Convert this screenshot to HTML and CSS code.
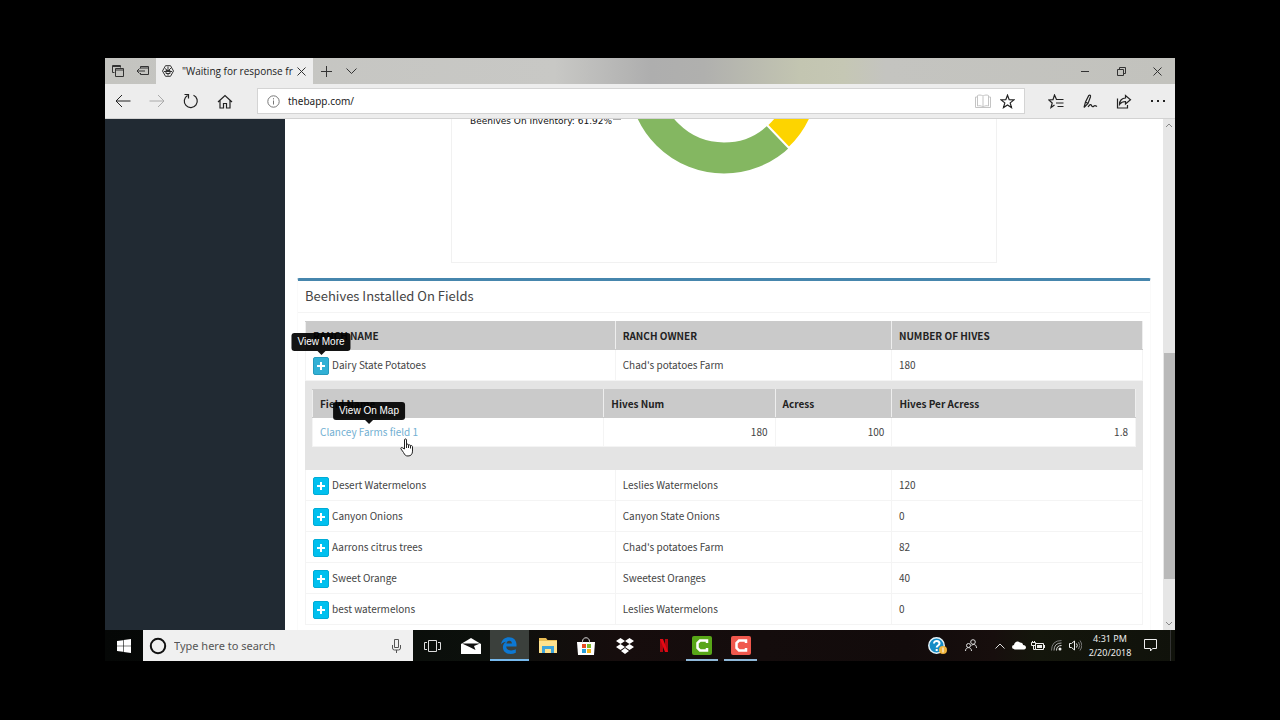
FILE: index.html
```html
<!DOCTYPE html>
<html lang="en">
<head>
    <meta charset="UTF-8">
    <meta name="viewport" content="width=device-width, initial-scale=1.0">
    <title>Beehives Installed On Fields</title>
    <link rel="stylesheet" href="styles.css">
</head>
<body>
    <div class="window">
        <!-- tab strip -->
        <div class="tab-strip">
            <button class="strip-btn" aria-label="Tabs set aside"><svg width="12" height="12" viewBox="0 0 12 12"><path d="M2.5 7.5h-2v-7h8v2M.5 1.5h8M3.500 3.500h8v8h-8zM3.500 5h8" /></svg></button>
            <button class="strip-btn" aria-label="Set tabs aside"><svg width="14" height="12" viewBox="0 0 14 12"><path d="M4.500 3.500v-2h8v8h-8v-1.500M4.500 3h8M9 6H1M3.500 3.500L1 6l2.500 2.500" /></svg></button>
            <div class="tab">
                <svg class="favicon" width="12" height="12" viewBox="0 0 12 12"><path d="M3.500 .7h5L11.500 6l-3 5.300h-5L.5 6z" /><path d="M3 3.500l2.500 2M9 3L6.500 5.500M6 1.500V5M2 6.500h8M4 5.500h4v3H4zM6 8.500v2" /></svg>
                <span class="tab-title">"Waiting for response fr</span>
                <button class="tab-close" aria-label="Close tab"><svg width="9" height="9" viewBox="0 0 9 9"><path d="M.5.5l8 8M8.500.5l-8 8" /></svg></button>
            </div>
            <button class="strip-btn" aria-label="New tab"><svg width="11" height="11" viewBox="0 0 11 11"><path d="M5.500 0v11M0 5.500h11" /></svg></button>
            <button class="strip-btn" aria-label="Tab previews"><svg width="11" height="7" viewBox="0 0 11 7"><path d="M.5.5l5 5 5-5" /></svg></button>
            <div class="window-controls">
                <button aria-label="Minimize"><svg width="8" height="9" viewBox="0 0 8 9"><path d="M0 4.500h8" /></svg></button>
                <button aria-label="Restore"><svg width="9" height="9" viewBox="0 0 9 9"><path d="M.5 2.500h6v6h-6zM2.500 2.500v-2h6v6h-2" /></svg></button>
                <button aria-label="Close"><svg width="9" height="9" viewBox="0 0 9 9"><path d="M.5.5l8 8M8.500.5l-8 8" /></svg></button>
            </div>
        </div>

        <!-- navigation bar -->
        <div class="nav-bar">
            <button aria-label="Back"><svg width="16" height="14" viewBox="0 0 16 14"><path d="M15.500 7H1M7 1L1 7l6 6" /></svg></button>
            <button class="disabled" aria-label="Forward"><svg width="16" height="14" viewBox="0 0 16 14"><path d="M.5 7H15M9 1l6 6-6 6" /></svg></button>
            <button aria-label="Refresh"><svg width="16" height="16" viewBox="0 0 16 16"><path class="bold" d="M10.500 2.200A6.500 6.500 0 1 1 4.500 2.500M1.500 1.500h4v4" /></svg></button>
            <button aria-label="Home"><svg width="16" height="15" viewBox="0 0 16 15"><path class="bold" d="M1 8l7-6.500L15 8M3 6.500v7.500h3.500V9.500h3V14H13V6.500" /></svg></button>
            <div class="address">
                <svg class="info" width="13" height="13" viewBox="0 0 13 13"><circle cx="6.500" cy="6.500" r="5.700" /><path d="M6.500 5.500v4M6.500 3.200v1.200" /></svg>
                <input type="text" aria-label="Address" value="thebapp.com/">
                <button class="reading" aria-label="Reading view"><svg width="16" height="14" viewBox="0 0 16 14"><path d="M8 2.500v11M8 2C6 .8 4 .8 2.500 1.500v10.500C4 11.500 6 11.500 8 13c2-1.500 4-1.500 5.500-1V1.500C12 .8 10 .8 8 2zM2.500 3h-2v10.500h15V3h-2" /></svg></button>
                <button aria-label="Add to favorites"><svg width="15" height="15" viewBox="0 0 15 15"><path class="bold" d="M7.500 1.200l1.700 4.500 4.800.2-3.800 3 1.300 4.700-4-2.700-4 2.700 1.300-4.700L1 5.900l4.800-.2z" /></svg></button>
            </div>
            <button aria-label="Hub"><svg width="16" height="15" viewBox="0 0 16 15"><path class="bold" d="M8.500 5.500L6.500 1 5 5.700.8 6l3.400 3L3 13.500l3.500-2.500M8 5.500h7.500M8 9h7.500M9.500 12.500h6" /></svg></button>
            <button aria-label="Add notes"><svg width="16" height="15" viewBox="0 0 16 15"><path class="bold" d="M2 13.500l1.500-5.500L6.800 1.500c1-.8 2 0 1.700 1.200L6 9.500l-4 4M3.500 8l2.500 1.500M6 13c2-3 3-3 3.500-1.500s1.500 1.500 2.500.5 1.500-.5 3 .5" /></svg></button>
            <button aria-label="Share"><svg width="16" height="15" viewBox="0 0 16 15"><path class="bold" d="M1.500 4.500v9.500h10V11M3.500 10.500c0-4 2.500-6.500 6-6.500V1.500l5 4.200-5 4.300V7.500c-3 0-4.500.8-6 3z" /></svg></button>
            <button aria-label="More"><svg width="16" height="4" viewBox="0 0 16 4"><path class="dots" d="M1 1h2v2H1zM7 1h2v2H7zM13 1h2v2h-2z" /></svg></button>
        </div>

        <!-- web page -->
        <div class="page">
            <aside class="sidebar"></aside>
            <main class="content">
                <div class="chart-box">
                    <svg width="544" height="143" viewBox="0 0 544 143" role="img" aria-label="Beehives chart">
                        <circle cx="272" cy="-41" r="80" fill="none" stroke="#84b761" stroke-width="31" />
                        <path d="M315 6L337 29A95.500 95.500 0 0 0 367 -41H336A64 64 0 0 1 315 6z" fill="#fdd400" stroke="#fff" stroke-width="2" />
                        <path d="M161 .5h8" stroke="#aaa" />
                        <text class="chart-label" x="18" y="5">Beehives On Inventory: 61.92%</text>
                    </svg>
                </div>

                <section class="box">
                    <h3 class="box-title">Beehives Installed On Fields</h3>
                    <div class="box-body">
                        <table class="ranches">
                            <colgroup>
                                <col class="col-name">
                                <col class="col-owner">
                                <col class="col-hives">
                            </colgroup>
                            <thead>
                                <tr><th>RANCH NAME</th><th>RANCH OWNER</th><th>NUMBER OF HIVES</th></tr>
                            </thead>
                            <tbody>
                                <tr>
                                    <td><div class="name"><span class="tip-anchor"><button class="btn-more active" aria-label="View More"></button><span class="tip">View More</span></span>Dairy State Potatoes</div></td>
                                    <td>Chad's potatoes Farm</td>
                                    <td>180</td>
                                </tr>
                                <tr class="details">
                                    <td colspan="3">
                                        <table class="fields">
                                            <colgroup>
                                                <col class="col-field">
                                                <col class="col-num">
                                                <col class="col-acres">
                                                <col class="col-per">
                                            </colgroup>
                                            <thead>
                                                <tr><th>Field Name</th><th>Hives Num</th><th>Acress</th><th>Hives Per Acress</th></tr>
                                            </thead>
                                            <tbody>
                                                <tr>
                                                    <td>
                                                        <span class="tip-anchor"><a href="#">Clancey Farms field 1</a><span class="tip">View On Map</span>
                                                            <svg class="pointer" width="14" height="19" viewBox="0 0 14 19"><path d="M4.500 11V2c0-1.500 2-1.500 2 0v5c0-1.200 2-1.200 2 0v.7c0-1.200 2-1.200 2 0v.6c0-1 2-1 2 .3v4.500c0 3-1.500 4.900-4.500 4.900-2.500 0-3.200-1-4.500-3.500L1 11c-.7-1.500 1-2 2-.8z" /><path d="M6.500 7v3M8.500 7.500V10M10.500 8v2.500" /></svg>
                                                        </span>
                                                    </td>
                                                    <td>180</td>
                                                    <td>100</td>
                                                    <td>1.8</td>
                                                </tr>
                                            </tbody>
                                        </table>
                                    </td>
                                </tr>
                                <tr>
                                    <td><div class="name"><button class="btn-more" aria-label="View More"></button>Desert Watermelons</div></td>
                                    <td>Leslies Watermelons</td>
                                    <td>120</td>
                                </tr>
                                <tr>
                                    <td><div class="name"><button class="btn-more" aria-label="View More"></button>Canyon Onions</div></td>
                                    <td>Canyon State Onions</td>
                                    <td>0</td>
                                </tr>
                                <tr>
                                    <td><div class="name"><button class="btn-more" aria-label="View More"></button>Aarrons citrus trees</div></td>
                                    <td>Chad's potatoes Farm</td>
                                    <td>82</td>
                                </tr>
                                <tr>
                                    <td><div class="name"><button class="btn-more" aria-label="View More"></button>Sweet Orange</div></td>
                                    <td>Sweetest Oranges</td>
                                    <td>40</td>
                                </tr>
                                <tr>
                                    <td><div class="name"><button class="btn-more" aria-label="View More"></button>best watermelons</div></td>
                                    <td>Leslies Watermelons</td>
                                    <td>0</td>
                                </tr>
                            </tbody>
                        </table>
                    </div>
                </section>
            </main>
            <div class="scrollbar">
                <svg width="8" height="5" viewBox="0 0 8 5"><path d="M1 4l3-3 3 3" /></svg>
                <div class="track"><div class="thumb"></div></div>
                <svg width="8" height="5" viewBox="0 0 8 5"><path d="M1 1l3 3 3-3" /></svg>
            </div>
        </div>

        <!-- taskbar -->
        <div class="taskbar">
            <button class="start" aria-label="Start"><svg width="14" height="14" viewBox="0 0 14 14"><path fill="#fff" d="M0 2l6-.8v5.500H0zM6.600 1.100L14 0v6.700H6.600zM0 7.300h6v5.500L0 12zM6.600 7.300H14V14l-7.400-1.100z" /></svg></button>
            <label class="search">
                <svg width="18" height="18" viewBox="0 0 18 18"><circle cx="9" cy="9" r="7.200" fill="none" stroke="#111" stroke-width="2" /></svg>
                <input type="text" aria-label="Search" placeholder="Type here to search">
                <svg width="11" height="14" viewBox="0 0 11 14"><path d="M3.500.5h4v8h-4zM1.500 6v3q0 2 2 2h4q2 0 2-2V6M5.500 11v3" fill="none" stroke="#555" /></svg>
            </label>
            <div class="apps">
                <button aria-label="Task View"><svg width="17" height="12" viewBox="0 0 17 12"><path d="M4.500.5h8v11h-8zM3 2.500H.5v7H3M14 2.500h2.500v7H14" fill="none" stroke="#ddd" /></svg></button>
                <button aria-label="Mail"><svg width="20" height="16" viewBox="0 0 20 16"><path fill="#fff" d="M0 6l10-6 10 6v10H0z" /><path fill="#111" d="M1 5.500h18l-6 2.500 1.500 4L8.500 9z" /></svg></button>
                <button class="current" aria-label="Edge"><svg width="16" height="17" viewBox="0 0 16 17"><path fill="#0d78d3" d="M0 7.500C.8 2.800 4 .3 8 .3c4.700 0 7.500 3.200 7.500 7.200v2H5.200c.2 3 2.500 4 5 4 1.700 0 3.200-.5 4.600-1.200v3.400c-1.600.8-3.400 1.200-5.400 1.200-4.600 0-7.500-2.700-7.500-6.700 0-2.400 1.200-4.400 3.300-5.500C3.200 4.900 1.400 5.500 0 7.500zM5.400 6.500h5.500C10.900 4.800 10 3.700 8.300 3.700c-1.600 0-2.600 1.100-2.900 2.800z" /></svg></button>
                <button aria-label="File Explorer"><svg width="18" height="15" viewBox="0 0 18 15"><path fill="#e9bd55" d="M0 0h7l1.500 2H18v5H0z" /><path fill="#ffe28d" d="M0 3h18v12H0z" /><path fill="#3ea5dc" d="M3 8h12v7h-3v-4H6v4H3z" /></svg></button>
                <button aria-label="Store"><svg width="18" height="18" viewBox="0 0 18 18"><path fill="#fff" d="M0 5h18l-1 13H1z" /><path d="M5.500 6V4.500c0-5 7-5 7 0V6" fill="none" stroke="#ddd" /><path fill="#e74c26" d="M5 7h4v4H5z" /><path fill="#7dba2a" d="M10 7h4v4h-4z" /><path fill="#279fdc" d="M5 12h4v4H5z" /><path fill="#f6b51b" d="M10 12h4v4h-4z" /></svg></button>
                <button aria-label="Dropbox"><svg width="18" height="16" viewBox="0 0 18 16"><path fill="#fff" d="M4.500 0L9 3 4.500 6 0 3zM13.500 0L18 3l-4.500 3L9 3zM4.500 6L9 9l-4.500 3L0 9zM13.500 6L18 9l-4.500 3L9 9zM9 10l4 3-4 3-4-3z" /></svg></button>
                <button aria-label="Netflix"><svg width="8" height="13" viewBox="0 0 8 13"><path fill="#b20710" d="M0 0h3v13H0zM5 0h3v13H5z" /><path fill="#e50914" d="M0 0h3l5 13H5z" /></svg></button>
                <button class="running" aria-label="Camtasia"><svg width="20" height="19" viewBox="0 0 20 19"><rect width="20" height="19" rx="2" fill="#58a618" /><path d="M15 7V4.500H8L5.500 7v5L8 14.500h7V12" fill="none" stroke="#fff" stroke-width="2.500" /></svg></button>
                <button class="running" aria-label="Camtasia Recorder"><svg width="20" height="19" viewBox="0 0 20 19"><rect width="20" height="19" rx="2" fill="#f0584d" /><path d="M15 7V4.500H8L5.500 7v5L8 14.500h7V12" fill="none" stroke="#fff" stroke-width="2.500" /></svg></button>
            </div>
            <div class="tray">
                <button class="help" aria-label="Get help"><svg width="19" height="18" viewBox="0 0 19 18"><circle cx="8.500" cy="8.500" r="7.700" fill="#168cc6" stroke="#e4f3fa" stroke-width="1.500" /><path d="M6 6.500c0-3.500 5.500-3.300 5.500 0 0 2-2.800 2-2.800 4M8.700 12v2" fill="none" stroke="#fff" stroke-width="2" /><circle cx="15" cy="13" r="4" fill="#f0b43c" /><path d="M15 10.500v5" stroke="#fff" /></svg></button>
                <button class="people" aria-label="People"><svg width="12" height="13" viewBox="0 0 12 13"><g fill="none" stroke="#ddd"><circle cx="8" cy="3" r="2.300" /><circle cx="3.500" cy="6.500" r="2" /><path d="M.5 12c0-4.500 6-4.500 6 0M6.500 6.500c2-2 5-1 5 2.500" /></g></svg></button>
                <button aria-label="Show hidden icons"><svg width="10" height="6" viewBox="0 0 10 6"><path d="M.5 5.500L5 1l4.500 4.500" fill="none" stroke="#ddd" /></svg></button>
                <button aria-label="OneDrive"><svg width="14" height="9" viewBox="0 0 14 9"><path fill="#fff" d="M2 8a2 2 0 0 1 0-4C2.500 1 5.500-.5 8 1.500c2 0 3 1 3 2.500 3.500 0 4 4 1 4.500H4Q2 8.500 2 8z" /></svg></button>
                <button aria-label="Battery"><svg width="14" height="10" viewBox="0 0 14 10"><path d="M4.500 2.500h8v6h-8zM13.500 4v3M.5 1.500h4v3h-4zM1.500 0v1.500M3.500 0v1.500M2.500 4.500v4h2" fill="none" stroke="#eee" /><path fill="#eee" d="M6 4h5v3H6z" /></svg></button>
                <button aria-label="Network"><svg width="11" height="11" viewBox="0 0 11 11"><g fill="none" stroke="#777"><path d="M.5 10.500q0-10 10-10" /><path d="M3 10.500q0-7.500 7.500-7.500" stroke="#aaa" /><path d="M5.500 10.500q0-5 5-5" stroke="#ddd" /></g><circle cx="9" cy="9" r="1.500" fill="#eee" /></svg></button>
                <button aria-label="Volume"><svg width="13" height="11" viewBox="0 0 13 11"><path d="M.5 3.500h2l3-2.500v9l-3-2.500h-2zM7.500 3.500q1.500 2 0 4" fill="none" stroke="#eee" /><path d="M9.500 2q2.500 3.500 0 7M11 .5q3.500 5 0 10" fill="none" stroke="#777" /></svg></button>
                <div class="clock"><span>4:31 PM</span><span>2/20/2018</span></div>
                <button class="notify" aria-label="Notifications"><svg width="13" height="13" viewBox="0 0 13 13"><path d="M.5.5h12v9H8.500l-2 2.500v-2.500h-6z" fill="none" stroke="#eee" /></svg></button>
            </div>
        </div>
    </div>
</body>
</html>
```

FILE: styles.css
```css
* {
    box-sizing: border-box;
}

body {
    margin: 0;
    height: 100vh;
    padding: 58px 105px 59px;
    background-color: #000;
    font-family: "Noto Sans", "Open Sans", sans-serif;
    overflow: hidden;
}

button {
    display: flex;
    align-items: center;
    justify-content: center;
    padding: 0;
    border: none;
    background: none;
    cursor: pointer;
}

input {
    min-width: 0;
    border: none;
    outline: none;
    background: none;
    font-family: inherit;
    font-size: 10px;
}

.window {
    display: flex;
    flex-direction: column;
    height: 100%;
}

/* tab strip */
.tab-strip {
    display: flex;
    height: 26px;
    flex-shrink: 0;
    background: linear-gradient(to right, #c4c4c0, #c8c8c5 42%, #aeaeae 51%, #b0b0ae 56%, #c3c5b1 65%, #c5c7b4 69%, #c4c4c0 73%, #c2c2bd);
}

.tab-strip svg,
.nav-bar svg,
.scrollbar svg {
    fill: none;
    stroke: #333;
    stroke-width: 1;
}

.strip-btn {
    width: 25px;
}

.tab {
    display: flex;
    align-items: center;
    width: 157px;
    margin: 0 1px;
    padding: 0 8px 0 6px;
    background-color: #ededed;
    font-family: "Open Sans", sans-serif;
    font-size: 10px;
    color: #222;
}

.tab-title {
    flex: 1;
    margin: 0 4px 0 8px;
    white-space: nowrap;
}

.favicon {
    flex-shrink: 0;
}

.window-controls {
    display: flex;
    margin-left: auto;
}

.window-controls button {
    width: 36px;
}

/* navigation bar */
.nav-bar {
    display: flex;
    height: 35px;
    flex-shrink: 0;
    padding: 0 0 0 1px;
    background-color: #ededed;
    border-bottom: 1px solid #d2d2d2;
}

.nav-bar button {
    width: 34px;
}

.nav-bar svg {
    stroke: #222;
}

.nav-bar .disabled svg {
    stroke: #aaa;
}

.nav-bar .bold {
    stroke-width: 1.2;
}

.nav-bar .dots {
    fill: #222;
    stroke: none;
}

.address {
    display: flex;
    align-items: center;
    flex: 1;
    margin: 4px 14px 4px 15px;
    padding: 0 4px 0 9px;
    background-color: #fff;
    border: 1px solid #d4d4d4;
}

.address input {
    flex: 1;
    margin-left: 7px;
    padding: 0 1px;
    color: #222;
}

.address button {
    width: 25px;
}

.address .info {
    stroke: #777;
}

.address .reading svg {
    stroke: #c4c4c4;
}

/* web page */
.page {
    display: flex;
    flex: 1;
    min-height: 0;
    background-color: #fff;
    font-family: "Noto Sans CJK SC", "Noto Sans", sans-serif;
    font-size: 10px;
    color: #444;
}

.sidebar {
    width: 180px;
    flex-shrink: 0;
    background-color: #212a33;
}

.content {
    flex: 1;
    padding: 0 12px;
    overflow: hidden;
}

.chart-box {
    display: flex;
    justify-content: center;
    width: 64%;
    margin: 0 auto 15px;
    border: 1px solid #f1f1f1;
    border-top: none;
}

.chart-label {
    font-family: "DejaVu Sans", sans-serif;
    font-size: 9px;
    fill: #111;
}

.box {
    border: 1px solid #fafafa;
    border-top: 3px solid #4686ad;
    border-radius: 2px;
}

.box-title {
    margin: 0;
    padding: 0 7px 1px;
    border-bottom: 1px solid #f4f4f4;
    font-size: 13px;
    font-weight: normal;
    line-height: 30px;
}

.box-body {
    padding: 8px 7px;
}

table {
    width: 100%;
    border-collapse: collapse;
    table-layout: fixed;
}

th,
td {
    padding: 0 7px;
    border: 1px solid #f4f4f4;
    text-align: left;
    line-height: 16px;
}

th {
    height: 28px;
    background-color: #cacaca;
    border-color: #cacaca #eee;
    color: #222;
}

.ranches td {
    height: 31px;
}

.col-name {
    width: 37%;
}

.col-owner {
    width: 33%;
}

.col-hives {
    width: 30%;
}

.col-field {
    width: 35.4%;
}

.col-num {
    width: 20.8%;
}

.col-acres {
    width: 14.2%;
}

.col-per {
    width: 29.6%;
}

.ranches .details > td {
    padding: 8px 6px 22px;
    background-color: #e4e4e4;
    border-color: #e4e4e4;
}

.fields td {
    height: 29px;
    background-color: #fff;
    text-align: right;
}

.fields td:first-child {
    text-align: left;
}

.fields a {
    color: #72afd2;
    text-decoration: none;
}

.name {
    display: flex;
    align-items: center;
    gap: 3px;
}

.btn-more {
    width: 16px;
    height: 18px;
    margin-top: 2px;
    background: linear-gradient(#fff, #fff) center / 8px 2px no-repeat, linear-gradient(#fff, #fff) center / 2px 8px no-repeat, #00c0ef;
    border: 1px solid #00acd6;
    border-radius: 2px;
}

.btn-more.active {
    background-color: #31b0d5;
    border-color: #269abc;
}

/* tooltips */
.tip-anchor {
    position: relative;
    display: inline-block;
}

.tip {
    position: absolute;
    bottom: 100%;
    left: 50%;
    z-index: 1;
    margin-bottom: 4px;
    padding: 0 6px;
    transform: translateX(-50%);
    background-color: rgba(0, 0, 0, 0.92);
    border-radius: 3px;
    font-family: "Liberation Sans", sans-serif;
    font-size: 10px;
    line-height: 18px;
    white-space: nowrap;
    color: #fff;
}

.tip::after {
    content: "";
    position: absolute;
    top: 100%;
    left: 50%;
    margin-left: -4px;
    border: 4px solid transparent;
    border-top-color: #111;
    border-bottom: none;
}

.pointer {
    position: absolute;
    right: 4px;
    top: 14px;
    fill: #fff;
    stroke: #222;
}

/* scrollbar */
.scrollbar {
    display: flex;
    flex-direction: column;
    align-items: center;
    width: 12px;
    flex-shrink: 0;
    padding: 4px 0;
    background-color: #e6e6e6;
}

.scrollbar svg {
    stroke: #888;
}

.track {
    display: flex;
    flex-direction: column;
    flex: 1;
    width: 100%;
}

.track::before {
    content: "";
    flex: 225;
}

.track::after {
    content: "";
    flex: 42;
}

.thumb {
    flex: 225;
    margin-left: 1px;
    background-color: #b9b9b9;
}

/* taskbar */
.taskbar {
    display: flex;
    height: 31px;
    flex-shrink: 0;
    background: linear-gradient(to right, #050706, #0c100c 35%, #160d0d 48%, #120b0b 75%, #170e0d 83%, #14160c 87%, #10120b);
}

.start {
    width: 38px;
}

.search {
    display: flex;
    align-items: center;
    width: 270px;
    padding: 0 11px 0 6px;
    background-color: #f0f0f0;
}

.search input {
    flex: 1;
    padding: 0;
    margin-left: 7px;
    font-size: 11px;
}

.search input::placeholder {
    color: #555;
}

.apps {
    display: grid;
    grid-template-columns: repeat(9, 1fr);
    width: 347px;
}

.apps button {
    border-top: 2px solid transparent;
    border-bottom: 2px solid transparent;
}

.apps .current {
    background-color: #3b403c;
    border-bottom-color: #76b9ed;
}

.apps .running {
    margin: 0 3px;
    border-bottom-color: #8fb8d8;
}

.tray {
    display: flex;
    margin-left: auto;
    padding-right: 4px;
}

.tray button {
    width: 19px;
}

.tray .help,
.tray .people {
    width: 34px;
}

.tray .people {
    margin-right: 2px;
}

.clock {
    display: flex;
    flex-direction: column;
    align-items: center;
    justify-content: center;
    width: 50px;
    font-size: 9px;
    line-height: 14px;
    color: #eee;
}

.tray .notify {
    width: 36px;
    padding-right: 4px;
    border-right: 1px solid #333;
}
```
